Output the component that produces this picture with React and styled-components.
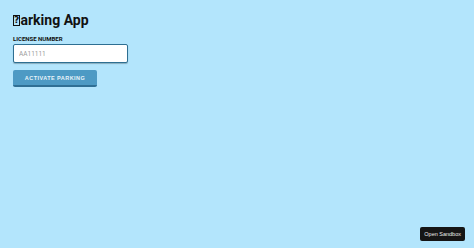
import React from "react";
import styled, { createGlobalStyle } from "styled-components";

const GlobalStyle = createGlobalStyle`
  html, body {
    margin: 0;
    padding: 0;
    background: #b3e5fc;
    font-family: Roboto, "Liberation Sans", Arial, sans-serif;
  }
`;

const Page = styled.div`
  min-height: 248px;
  box-sizing: border-box;
  padding: 12px 13px;
  display: flex;
  flex-direction: column;
`;

const Title = styled.h1`
  margin: 0 0 7px;
  font-size: 14px;
  font-weight: 700;
  color: #111;
  line-height: 16px;
  display: flex;
  align-items: center;
`;

const Tofu = styled.span`
  display: inline-flex;
  align-items: center;
  justify-content: center;
  width: 5px;
  height: 9px;
  border: 1px solid #111;
  font-family: "DejaVu Sans", sans-serif;
  font-size: 9px;
  font-weight: 700;
  line-height: 1;
  margin-right: 0.5px;
  overflow: hidden;
`;

const Form = styled.form`
  display: flex;
  flex-direction: column;
  align-items: flex-start;
`;

const Label = styled.label`
  font-size: 6px;
  line-height: 7px;
  font-weight: 700;
  color: #111;
  margin-bottom: 2px;
`;

const Input = styled.input`
  width: 115px;
  height: 19px;
  box-sizing: border-box;
  border: 1.5px solid #2e6f92;
  border-radius: 2px;
  padding: 0 5px;
  font-family: inherit;
  font-size: 6.5px;
  background: #fff;
  box-shadow: 0 1px 1px rgba(0, 0, 0, 0.25);
  outline: none;
  &::placeholder {
    color: #9a9a9a;
  }
`;

const Button = styled.button`
  margin-top: 7px;
  width: 84px;
  height: 17px;
  box-sizing: border-box;
  border: none;
  border-bottom: 2px solid #2f6f94;
  border-radius: 2px;
  background: #4d9ac4;
  color: #e8f4fa;
  font-family: "Liberation Sans", Arial, sans-serif;
  font-size: 5.5px;
  font-weight: 700;
  letter-spacing: 0.45px;
  padding: 0;
`;

const SandboxButton = styled.button`
  position: fixed;
  right: 9px;
  bottom: 7px;
  height: 14px;
  padding: 0 4px;
  border: none;
  border-radius: 2px;
  background: #151515;
  color: #eee;
  font-family: "Liberation Sans", Arial, sans-serif;
  font-size: 5.5px;
`;

export default function App() {
  return (
    <>
      <GlobalStyle />
      <Page>
        <Title>
          <Tofu>?</Tofu>arking App
        </Title>
        <Form onSubmit={(e) => e.preventDefault()}>
          <Label>LICENSE NUMBER</Label>
          <Input placeholder="AA11111" />
          <Button type="submit">ACTIVATE PARKING</Button>
        </Form>
      </Page>
      <SandboxButton>Open Sandbox</SandboxButton>
    </>
  );
}
